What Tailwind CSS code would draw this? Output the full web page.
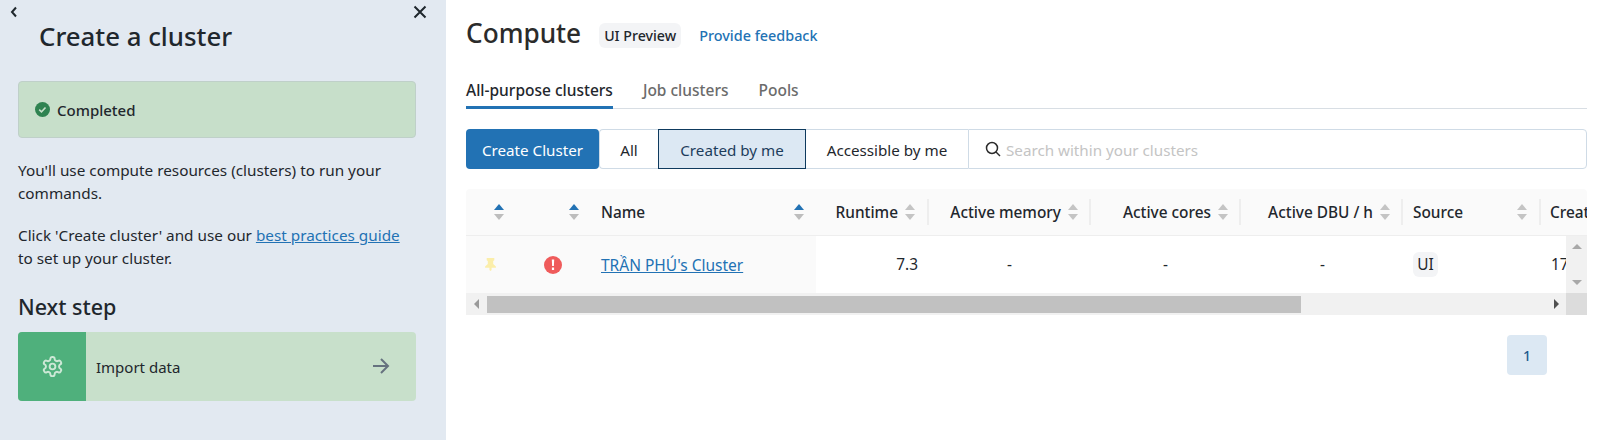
<!DOCTYPE html>
<html lang="en">
  <head>
    <meta charset="UTF-8" />
    <title>Compute</title>
    <script src="https://cdn.jsdelivr.net/npm/@tailwindcss/browser@4"></script>
  </head>
  <body class="font-['Noto_Sans',sans-serif] bg-white text-[#1f272d] text-[15.3px] h-[440px] w-[1614px] overflow-hidden flex">
    <svg class="hidden">
      <symbol id="sort-blue" viewBox="0 0 10 16">
        <path d="M5 0l5 6H0z" fill="#2272b4" />
        <path d="M0 10h10l-5 6z" fill="#bdbdbd" />
      </symbol>
      <symbol id="sort-grey" viewBox="0 0 10 16">
        <path d="M5 0l5 6H0z" fill="#c4c4c4" />
        <path d="M0 10h10l-5 6z" fill="#c4c4c4" />
      </symbol>
    </svg>

    <!-- Left panel -->
    <aside class="w-[446px] h-full shrink-0 bg-[#e2e9f1] pl-[18px] pr-[30px]">
      <div class="h-[20px] -ml-[12px] -mr-[12px] pt-[4px] flex justify-between items-start">
        <svg class="w-4 h-4" viewBox="0 0 16 16" fill="none" stroke="#1f272d" stroke-width="2"><path d="M10 3.5 6 8l4 4.5" /></svg>
        <svg class="w-4 h-4" viewBox="0 0 16 16" fill="none" stroke="#1f272d" stroke-width="2"><path d="M2.5 2.5l11 11M13.500 2.500l-11 11" /></svg>
      </div>
      <h2 class="ml-[21px] text-[25.800px] leading-[32px] font-medium">Create a cluster</h2>

      <div class="mt-[29px] h-[57px] flex items-center gap-[7px] pl-[16px] bg-[#c7dfca] border border-[#bfd0c9] rounded">
        <svg class="w-[15px] h-[15px]" viewBox="0 0 16 16">
          <circle cx="8" cy="8" r="8" fill="#2f8351" />
          <path d="M4.500 8.200l2.400 2.300 4.300-4.600" fill="none" stroke="#c7dfca" stroke-width="1.700" />
        </svg>
        <span class="font-medium text-[15px] pt-[2px]">Completed</span>
      </div>

      <p class="mt-[21px] leading-[23px]">You'll use compute resources (clusters) to run your commands.</p>
      <p class="mt-[19px] leading-[23px]">
        Click 'Create cluster' and use our
        <a href="#" class="text-[#2272b4] underline">best practices guide</a>
        to set up your cluster.
      </p>

      <h3 class="mt-[21px] text-[21.500px] leading-[32px] font-medium">Next step</h3>
      <div class="mt-[9px] h-[69px] flex items-center bg-[#c8e0cb] rounded-sm overflow-hidden">
        <div class="w-[68px] h-full bg-[#4fb07c] flex items-center justify-center">
          <svg class="w-[23px] h-[23px]" viewBox="0 0 24 24" fill="none" stroke="#cde8d6" stroke-width="2">
            <path d="M12.220 2h-.44a2 2 0 0 0-2 2v.18a2 2 0 0 1-1 1.730l-.43.25a2 2 0 0 1-2 0l-.15-.08a2 2 0 0 0-2.730.73l-.22.38a2 2 0 0 0 .73 2.730l.15.1a2 2 0 0 1 1 1.720v.51a2 2 0 0 1-1 1.740l-.15.09a2 2 0 0 0-.73 2.730l.22.38a2 2 0 0 0 2.730.73l.15-.08a2 2 0 0 1 2 0l.43.25a2 2 0 0 1 1 1.730V20a2 2 0 0 0 2 2h.44a2 2 0 0 0 2-2v-.18a2 2 0 0 1 1-1.730l.43-.25a2 2 0 0 1 2 0l.15.08a2 2 0 0 0 2.730-.73l.22-.39a2 2 0 0 0-.73-2.730l-.15-.08a2 2 0 0 1-1-1.740v-.5a2 2 0 0 1 1-1.740l.15-.09a2 2 0 0 0 .73-2.730l-.22-.38a2 2 0 0 0-2.730-.73l-.15.08a2 2 0 0 1-2 0l-.43-.25a2 2 0 0 1-1-1.730V4a2 2 0 0 0-2-2z" />
            <circle cx="12" cy="12" r="3" />
          </svg>
        </div>
        <span class="ml-[10px] mt-[2px] text-[15px]">Import data</span>
        <svg class="w-[18px] h-[18px] ml-auto mr-[26px] -mt-[1px]" viewBox="0 0 18 18" fill="none" stroke="#66727f" stroke-width="2"><path d="M1 9h15M9 2l7 7-7 7" /></svg>
      </div>
    </aside>

    <!-- Main -->
    <main class="flex-1 min-w-0 pl-[20px] pr-[27px] pt-[14px]">
      <div class="h-[40px] flex items-center">
        <h1 class="text-[26.200px] leading-[40px] -mt-[2px] font-medium text-[#2b2b2b]">Compute</h1>
        <span class="ml-[18px] mt-[3px] h-[25px] w-[82px] flex items-center justify-center bg-[#f3f4f6] rounded-md text-[14.200px] font-medium">UI Preview</span>
        <a href="#" class="ml-[18px] mt-[3px] text-[#2272b4] text-[14.400px] font-medium">Provide feedback</a>
      </div>

      <div class="mt-[18px] h-[37px] flex border-b border-[#d8dee4] text-[15.500px] font-medium">
        <div class="h-[37px] pt-[8px] leading-[20px] border-b-[3px] border-[#2272b4]">All-purpose clusters</div>
        <div class="ml-[30px] pt-[8px] leading-[20px] text-[#6b6b6b]">Job clusters</div>
        <div class="ml-[30px] pt-[8px] leading-[20px] text-[#6b6b6b]">Pools</div>
      </div>

      <div class="mt-[20px] h-[40px] flex text-[15.200px]">
        <button class="w-[133px] pt-[2px] bg-[#2272b4] text-white rounded">Create Cluster</button>
        <button class="w-[59px] pt-[2px] border border-r-0 border-[#cfdbe6] rounded-l">All</button>
        <button class="w-[148px] pt-[2px] bg-[#dce8f3] border border-[#0e3a5e] text-[#1c3d5c]">Created by me</button>
        <button class="w-[162px] pt-[2px] border-y border-[#cfdbe6]">Accessible by me</button>
        <div class="flex-1 flex items-center pl-[16px] gap-[5px] border border-[#cfdbe6] rounded-r">
          <svg class="w-4 h-4" viewBox="0 0 16 16" fill="none" stroke="#2b2b2b" stroke-width="1.500"><circle cx="7" cy="7" r="5.500" /><path d="M11 11l4 4" /></svg>
          <span class="text-[#c4c4c4] pt-[2px]">Search within your clusters</span>
        </div>
      </div>

      <!-- Table -->
      <div class="mt-[20px] text-[15.400px] overflow-hidden">
        <div class="h-[47px] flex items-center bg-[#fafafa] border-b border-[#eeeeee] font-medium whitespace-nowrap rounded-t">
          <div class="w-[75px] flex justify-end pr-[37px] shrink-0"><svg class="w-[10px] h-4"><use href="#sort-blue" /></svg></div>
          <div class="w-[49px] flex justify-start pl-[28px] shrink-0"><svg class="w-[10px] h-4"><use href="#sort-blue" /></svg></div>
          <div class="w-[226px] pl-[11px] flex items-center justify-between pr-[12px] shrink-0"><span class="pt-[2px]">Name</span><svg class="w-[10px] h-4"><use href="#sort-blue" /></svg></div>
          <div class="w-[113px] h-[26px] flex items-center justify-end gap-[7px] pr-[12px] border-r-2 border-[#eeeeee] shrink-0"><span class="pt-[2px]">Runtime</span><svg class="w-[10px] h-4"><use href="#sort-grey" /></svg></div>
          <div class="w-[162px] h-[26px] flex items-center justify-end gap-[7px] pr-[11px] border-r-2 border-[#eeeeee] shrink-0"><span class="pt-[2px]">Active memory</span><svg class="w-[10px] h-4"><use href="#sort-grey" /></svg></div>
          <div class="w-[150px] h-[26px] flex items-center justify-end gap-[7px] pr-[11px] border-r-2 border-[#eeeeee] shrink-0"><span class="pt-[2px]">Active cores</span><svg class="w-[10px] h-4"><use href="#sort-grey" /></svg></div>
          <div class="w-[162px] h-[26px] flex items-center justify-end gap-[7px] pr-[11px] border-r-2 border-[#eeeeee] shrink-0"><span class="pt-[2px]">Active DBU / h</span><svg class="w-[10px] h-4"><use href="#sort-grey" /></svg></div>
          <div class="w-[138px] h-[26px] flex items-center justify-between pl-[10px] pr-[12px] border-r-2 border-[#eeeeee] shrink-0"><span class="pt-[2px]">Source</span><svg class="w-[10px] h-4"><use href="#sort-grey" /></svg></div>
          <div class="pl-[9px] pt-[2px]">Created by</div>
        </div>

        <div class="h-[57px] flex">
          <div class="flex-1 min-w-0 flex items-center overflow-hidden whitespace-nowrap">
            <div class="w-[350px] h-full flex items-center bg-[#fafafa] shrink-0">
              <div class="w-[75px] pl-[18px] shrink-0">
                <svg class="w-[13px] h-[17px]" viewBox="0 0 24 24" fill="#fbeeaa"><path d="M5 0h14v4l-2 1.500V11l5 4.500V18h-8v4L12 24l-2-2v-4H2v-2.500L7 11V5.500L5 4z" /></svg>
              </div>
              <div class="w-[49px] pl-[3px] shrink-0">
                <svg class="w-[18px] h-[18px]" viewBox="0 0 18 18">
                  <circle cx="9" cy="9" r="9" fill="#ef5b5b" />
                  <path d="M7.800 3.500h2.400l-.3 6.500H8.100zM7.900 11.600h2.200v2.300H7.900z" fill="#fff" />
                </svg>
              </div>
              <a href="#" class="pl-[11px] pt-[2px] text-[#2272b4] underline text-[15.500px]">TRẦN PHÚ's Cluster</a>
            </div>
            <div class="w-[113px] pr-[11px] text-right shrink-0">7.3</div>
            <div class="w-[162px] pl-[78px] shrink-0">-</div>
            <div class="w-[150px] pl-[72px] shrink-0">-</div>
            <div class="w-[162px] pl-[79px] shrink-0">-</div>
            <div class="w-[138px] pl-[10px] shrink-0"><span class="inline-flex items-center justify-center w-[25px] h-[25px] bg-[#f3f4f6] rounded-md">UI</span></div>
            <div class="pl-[10px]">17/07/2020</div>
          </div>
          <div class="w-[21px] bg-[#f1f1f1] flex flex-col items-center justify-between py-[8px] shrink-0">
            <svg class="w-[10px] h-[5px]" viewBox="0 0 10 5" fill="#a8a8a8"><path d="M5 0l5 5H0z" /></svg>
            <svg class="w-[10px] h-[5px]" viewBox="0 0 10 5" fill="#a8a8a8"><path d="M0 0h10L5 5z" /></svg>
          </div>
        </div>

        <div class="h-[22px] flex bg-[#f1f1f1]">
          <div class="w-[21px] flex items-center justify-center">
            <svg class="w-[5px] h-[10px]" viewBox="0 0 5 10" fill="#9a9a9a"><path d="M5 0v10L0 5z" /></svg>
          </div>
          <div class="w-[814px] mt-[3px] h-[17px] bg-[#c1c1c1]"></div>
          <div class="flex-1 flex items-center justify-end pr-[7px]">
            <svg class="w-[5px] h-[10px]" viewBox="0 0 5 10" fill="#505050"><path d="M0 0v10l5-5z" /></svg>
          </div>
          <div class="w-[21px] bg-[#dcdcdc]"></div>
        </div>
      </div>

      <div class="mt-[20px] pr-[40px] flex justify-end">
        <button class="w-[40px] h-[40px] bg-[#dce8f3] text-[#1c5a8c] rounded text-[14px] font-medium">1</button>
      </div>
    </main>
  </body>
</html>
